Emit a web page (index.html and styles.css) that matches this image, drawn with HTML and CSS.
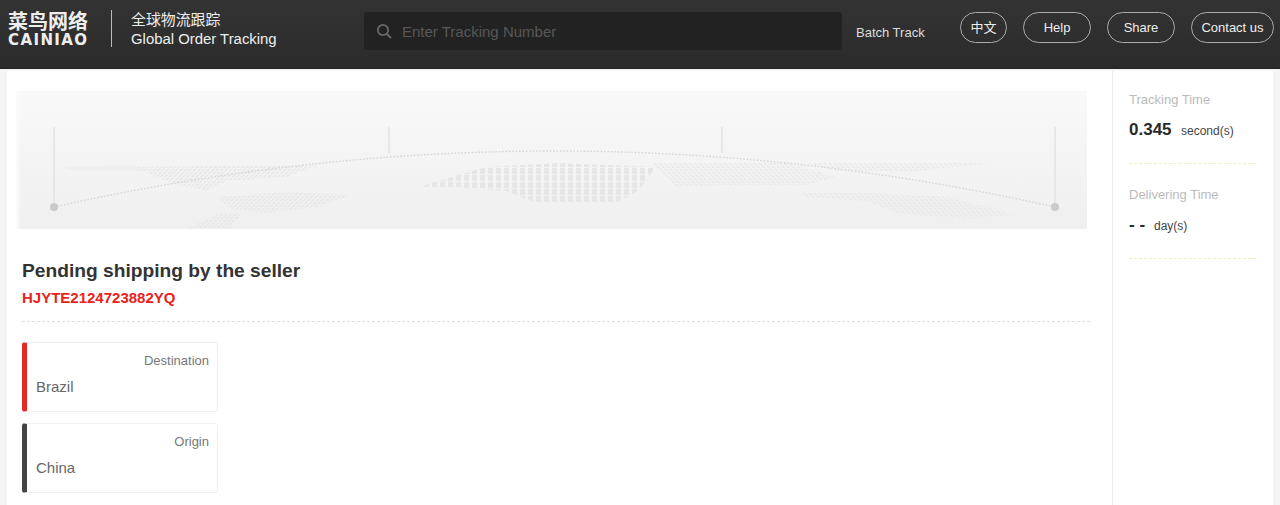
FILE: index.html
```html
<!DOCTYPE html>
<html lang="en">
<head>
  <meta charset="UTF-8" />
  <title>Global Order Tracking</title>
  <link rel="stylesheet" href="styles.css">
</head>
<body>
  <header class="top-bar">
    <div class="logo">
      <div class="logo-cn">菜鸟网络</div>
      <div class="logo-en">CAINIAO</div>
    </div>
    <div class="site-name">
      <div>全球物流跟踪</div>
      <div>Global Order Tracking</div>
    </div>
    <div class="search-box">
      <svg class="search-icon" width="16" height="16" viewBox="0 0 16 16">
        <circle cx="7" cy="7" r="5.2" fill="none" stroke="#6a6a6a" stroke-width="1.8" />
        <line x1="10.8" y1="10.8" x2="15" y2="15" stroke="#6a6a6a" stroke-width="1.8" />
      </svg>
      <span>Enter Tracking Number</span>
    </div>
    <a class="batch-link">Batch Track</a>
    <nav class="top-nav">
      <a class="pill pill-lang">中文</a>
      <a class="pill pill-mid">Help</a>
      <a class="pill pill-mid">Share</a>
      <a class="pill pill-contact">Contact us</a>
    </nav>
  </header>

  <div class="page">
    <main class="content">
      <div class="banner">
        <svg width="1071" height="138" viewBox="0 0 1071 138">
          <defs>
            <pattern id="stripeLeft" width="4.5" height="3" patternUnits="userSpaceOnUse" patternTransform="skewX(-45)">
              <rect width="2.2" height="2.4" fill="#e6e6e6" />
            </pattern>
            <pattern id="stripeRight" width="5" height="3" patternUnits="userSpaceOnUse" patternTransform="skewX(45)">
              <rect width="2.4" height="2.4" fill="#e8e8e8" />
            </pattern>
            <pattern id="dashGrid" width="8" height="7" patternUnits="userSpaceOnUse">
              <rect width="5" height="6" fill="#e6e6e6" />
            </pattern>
          </defs>
          <g class="map">
            <polygon points="44,76 118,74 130,80 60,80" fill="#efefef" />
            <polygon points="118,76 305,74 270,86 210,90 190,100 150,90" fill="url(#stripeLeft)" />
            <polygon points="201,106 270,101 335,104 300,116 250,122 215,118" fill="url(#stripeLeft)" />
            <polygon points="171,138 205,122 225,122 215,138" fill="url(#stripeLeft)" />
            <polygon points="402,96 470,76 540,72 640,76 622,100 600,112 520,112 490,100 440,96" fill="url(#dashGrid)" />
            <polygon points="637,72 770,72 820,86 790,94 700,94 660,96" fill="url(#stripeRight)" />
            <polygon points="790,72 975,72 900,80 820,80" fill="url(#stripeRight)" />
            <polygon points="785,102 850,102 940,106 850,110 790,106" fill="url(#stripeRight)" />
            <polygon points="851,110 930,106 1000,124 950,128 880,122" fill="url(#stripeRight)" />
          </g>
          <line x1="38" y1="36" x2="38" y2="116" class="pole" />
          <line x1="373" y1="36" x2="373" y2="62" class="pole" />
          <line x1="706" y1="36" x2="706" y2="62" class="pole" />
          <line x1="1039" y1="36" x2="1039" y2="116" class="pole" />
          <path d="M38 116 Q538 4 1039 116" class="route" />
          <circle cx="38" cy="116" r="4" fill="#cacaca" />
          <circle cx="1039" cy="116" r="4" fill="#cacaca" />
        </svg>
      </div>

      <section class="order-head">
        <h1>Pending shipping by the seller</h1>
        <div class="tracking-no">HJYTE2124723882YQ</div>
      </section>

      <div class="route-card card-dest">
        <div class="card-label">Destination</div>
        <div class="card-value">Brazil</div>
      </div>
      <div class="route-card card-origin">
        <div class="card-label">Origin</div>
        <div class="card-value">China</div>
      </div>
    </main>

    <aside class="side">
      <div class="stat">
        <div class="stat-title">Tracking Time</div>
        <div class="stat-line"><b class="num-big">0.345</b><span>second(s)</span></div>
      </div>
      <div class="stat">
        <div class="stat-title">Delivering Time</div>
        <div class="stat-line"><b class="num-none">- -</b><span>day(s)</span></div>
      </div>
    </aside>
  </div>
</body>
</html>
```

FILE: styles.css
```css
html, body { margin: 0; height: 100%; overflow: hidden; }
body { font-family: "Liberation Sans", "Noto Sans CJK SC", sans-serif; background: #f4f4f4; color: #333; }

.top-bar { display: flex; align-items: flex-start; height: 69px; box-sizing: border-box; background: linear-gradient(#333, #2b2b2b); border-bottom: 1px solid #222; color: #fff; }
.logo { width: 103px; margin: 10px 0 0 8px; color: #eee; }
.logo-cn { font-size: 20px; line-height: 24px; font-weight: bold; white-space: nowrap; }
.logo-en { font-family: "DejaVu Sans", sans-serif; font-size: 15px; line-height: 13px; font-weight: bold; letter-spacing: 1.4px; white-space: nowrap; }
.site-name { margin-top: 10px; height: 37px; box-sizing: border-box; padding: 1px 0 0 19px; border-left: 1px solid #bbb; width: 253px; font-size: 14.9px; line-height: 19px; color: #eee; white-space: nowrap; }
.search-box { display: flex; align-items: center; gap: 10px; width: 478px; height: 38px; margin-top: 12px; padding-left: 12px; box-sizing: border-box; background: #222; border-radius: 3px; font-size: 15px; color: #585858; }
.batch-link { margin: 25px 0 0 14px; width: 104px; font-size: 13px; line-height: 16px; color: #ddd; }
.top-nav { display: flex; gap: 16px; margin-top: 12px; }
.pill { height: 31px; box-sizing: border-box; border: 1px solid #aaa; border-radius: 16px; text-align: center; font-size: 13px; line-height: 29px; color: #eee; }
.pill-lang { width: 47px; }
.pill-mid { width: 68px; }
.pill-contact { width: 83px; }

.page { display: flex; margin: 2px 7px 0; height: 434px; }
.content { width: 1105px; box-sizing: border-box; background: #fff; padding: 20px 0 0 9px; }
.banner { width: 1071px; height: 138px; background: linear-gradient(#f9f9f9, #efefef); box-shadow: inset 5px 0 3px -2px #fbfbfb; }
.banner svg { display: block; }
.map { filter: blur(0.7px); }
.pole { stroke: #e2e2e2; stroke-width: 1.5; }
.route { fill: none; stroke: #d6d6d6; stroke-width: 1.4; stroke-dasharray: 1.6 1.8; }

.order-head { width: 1068px; margin: 30px 0 20px 6px; padding-bottom: 12px; border-bottom: 1px dashed #ddd; }
.order-head h1 { margin: 0; font-size: 19.2px; line-height: 24px; font-weight: bold; color: #333; }
.tracking-no { margin-top: 4px; font-size: 15px; line-height: 22px; font-weight: bold; color: #e8221c; }

.route-card { width: 196px; height: 70px; box-sizing: border-box; margin: 0 0 11px 6px; padding: 10px 8px 0 9px; background: #fff; border: 1px solid #f0f0f0; border-left: 5px solid #e32b26; border-radius: 3px; }
.card-origin { border-left-color: #444; }
.card-label { text-align: right; font-size: 13px; line-height: 16px; color: #777; }
.card-value { margin-top: 8px; font-size: 15px; line-height: 20px; color: #666; }

.side { width: 161px; box-sizing: border-box; background: #fff; border-left: 1px solid #ececec; padding: 21px 17px 0 16px; }
.stat { height: 71px; margin-bottom: 23px; border-bottom: 1px dashed #f3f0c0; }
.stat-title { font-size: 13px; line-height: 16px; color: #bbb; }
.stat-line { display: flex; align-items: baseline; margin-top: 12px; font-size: 12px; line-height: 20px; color: #444; }
.num-big { width: 52px; font-size: 17px; color: #2a2a2a; }
.num-none { width: 25px; font-size: 17px; color: #2a2a2a; }
```
